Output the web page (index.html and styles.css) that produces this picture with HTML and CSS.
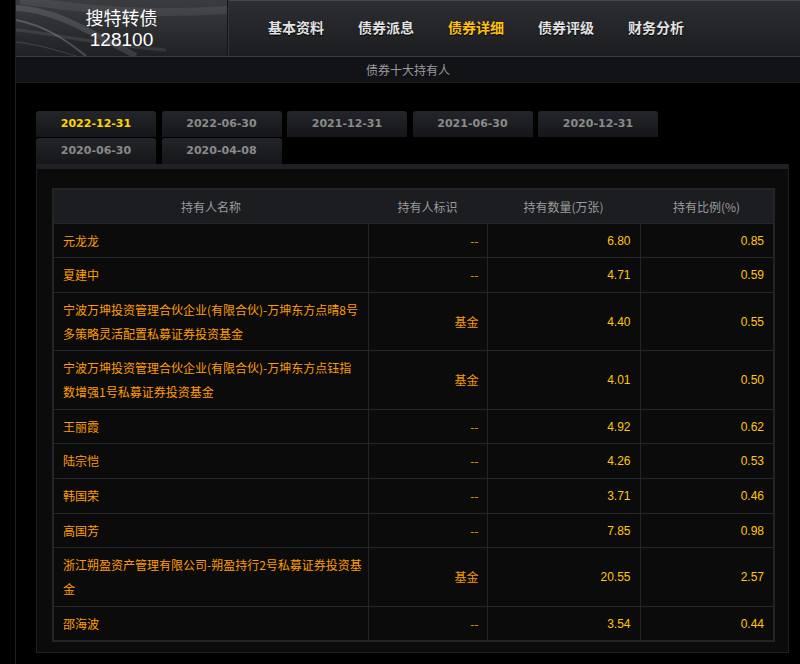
FILE: index.html
```html
<!DOCTYPE html>
<html lang="zh-CN">
<head>
  <meta charset="UTF-8">
  <title>搜特转债 - 债券十大持有人</title>
  <link rel="stylesheet" href="styles.css">
</head>
<body>
  <div class="page">
    <div class="top">
      <div class="logo">
        <svg class="swoosh" width="212" height="56" viewBox="0 0 212 56">
          <path d="M0 8 C40 10 70 30 120 56" stroke="rgba(255,255,255,0.12)" stroke-width="6" fill="none"/>
          <path d="M0 20 C30 26 50 40 70 56" stroke="rgba(255,255,255,0.20)" stroke-width="2" fill="none"/>
          <path d="M0 30 C40 34 80 44 150 50" stroke="rgba(255,255,255,0.09)" stroke-width="3" fill="none"/>
          <path d="M4 0 C60 8 120 16 212 10" stroke="rgba(255,255,255,0.07)" stroke-width="8" fill="none"/>
          <path d="M0 42 C20 44 40 50 60 56" stroke="rgba(255,255,255,0.14)" stroke-width="1" fill="none"/>
        </svg>
        <div class="name">搜特转债</div>
        <div class="code">128100</div>
      </div>
      <ul class="nav">
        <li>基本资料</li>
        <li>债券派息</li>
        <li class="on">债券详细</li>
        <li>债券评级</li>
        <li>财务分析</li>
      </ul>
    </div>
    <div class="subbar">债券十大持有人</div>

    <div class="main">
      <div class="tabs">
        <div class="tab on">2022-12-31</div>
        <div class="tab">2022-06-30</div>
        <div class="tab">2021-12-31</div>
        <div class="tab">2021-06-30</div>
        <div class="tab">2020-12-31</div>
        <div class="tab">2020-06-30</div>
        <div class="tab">2020-04-08</div>
      </div>

      <div class="panel">
        <table class="holders">
          <colgroup>
            <col style="width:315px">
            <col style="width:119px">
            <col style="width:153px">
            <col style="width:134px">
          </colgroup>
          <thead>
            <tr>
              <th>持有人名称</th>
              <th>持有人标识</th>
              <th>持有数量(万张)</th>
              <th>持有比例(%)</th>
            </tr>
          </thead>
          <tbody>
            <tr><td class="nm">元龙龙</td><td class="tag">--</td><td class="num">6.80</td><td class="num">0.85</td></tr>
            <tr><td class="nm">夏建中</td><td class="tag">--</td><td class="num">4.71</td><td class="num">0.59</td></tr>
            <tr><td class="nm">宁波万坤投资管理合伙企业(有限合伙)-万坤东方点晴8号多策略灵活配置私募证券投资基金</td><td class="tag">基金</td><td class="num">4.40</td><td class="num">0.55</td></tr>
            <tr><td class="nm">宁波万坤投资管理合伙企业(有限合伙)-万坤东方点钰指数增强1号私募证券投资基金</td><td class="tag">基金</td><td class="num">4.01</td><td class="num">0.50</td></tr>
            <tr><td class="nm">王丽霞</td><td class="tag">--</td><td class="num">4.92</td><td class="num">0.62</td></tr>
            <tr><td class="nm">陆宗恺</td><td class="tag">--</td><td class="num">4.26</td><td class="num">0.53</td></tr>
            <tr><td class="nm">韩国荣</td><td class="tag">--</td><td class="num">3.71</td><td class="num">0.46</td></tr>
            <tr><td class="nm">高国芳</td><td class="tag">--</td><td class="num">7.85</td><td class="num">0.98</td></tr>
            <tr><td class="nm">浙江朔盈资产管理有限公司-朔盈持行2号私募证券投资基金</td><td class="tag">基金</td><td class="num">20.55</td><td class="num">2.57</td></tr>
            <tr><td class="nm">邵海波</td><td class="tag">--</td><td class="num">3.54</td><td class="num">0.44</td></tr>
          </tbody>
        </table>
      </div>
    </div>
  </div>
</body>
</html>
```

FILE: styles.css
```css
* {
  box-sizing: border-box;
}

body {
  margin: 0;
  background: #000;
  font-family: "Noto Sans CJK SC", sans-serif;
}

.page {
  margin-left: 15px;
  border-left: 1px solid #1e1e1e;
  min-height: 664px;
}

/* cabeçalho */
.top {
  display: flex;
  height: 57px;
  background: linear-gradient(#2c2e32, #1c1d21);
  box-shadow: inset 0 1px 0 #45474c;
  border-bottom: 1px solid #3a3b3f;
}

.logo {
  position: relative;
  width: 212px;
  display: flex;
  flex-direction: column;
  align-items: center;
  justify-content: center;
  gap: 1px;
  background: linear-gradient(#3a3c40, #202125);
  border-right: 1px solid #121315;
  box-shadow: 1px 0 0 #34363a;
  overflow: hidden;
}

.swoosh {
  position: absolute;
  left: 0;
  top: 0;
}

.name,
.code {
  position: relative;
  color: #fff;
  line-height: 21px;
}

.name {
  font-size: 18px;
}

.code {
  font-family: "Liberation Sans", sans-serif;
  font-size: 19px;
}

.nav {
  display: flex;
  align-items: center;
  list-style: none;
  margin: 0;
  padding: 0 0 2px 23px;
}

.nav li {
  width: 90px;
  text-align: center;
  font-size: 14px;
  font-weight: bold;
  color: #e2e2e2;
  text-shadow: 0 1px 1px #000;
}

.nav li.on {
  color: #ffc20e;
}

.subbar {
  height: 26px;
  line-height: 25px;
  background: #121316;
  border-bottom: 1px solid #1d1e21;
  text-align: center;
  font-size: 12px;
  color: #9a9a9a;
}

/* conteúdo */
.main {
  padding: 28px 11px 12px 20px;
}

.tabs {
  display: flex;
  flex-wrap: wrap;
  width: 630px;
  column-gap: 5.5px;
  row-gap: 1px;
}

.tab {
  width: 120px;
  height: 26px;
  line-height: 26px;
  text-align: center;
  font-family: "DejaVu Sans", sans-serif;
  font-size: 11px;
  font-weight: bold;
  color: #8a8a8a;
  background: linear-gradient(#24252a, #151619);
  border-radius: 3px 3px 0 0;
}

.tab.on {
  color: #ffd400;
}

.panel {
  background: #0b0b0b;
  border: 1px solid #1f2023;
  border-top: 5px solid #202125;
  padding: 19px 15px 10px 15px;
}

.holders {
  width: 100%;
  table-layout: fixed;
  border-collapse: collapse;
  border: 2px solid #232428;
  font-size: 12px;
}

.holders th {
  height: 34px;
  background: #1c1d21;
  color: #9b9b9b;
  font-weight: normal;
  text-align: center;
  border-bottom: 1px solid #25262a;
}

.holders td {
  padding: 5px 9px 4.6px 9px;
  line-height: 24px;
  border: 1px solid #25262a;
}

.holders .nm {
  color: #ff9d00;
  padding-right: 5px;
}

.holders .tag {
  text-align: right;
  padding-right: 8px;
  color: #f59a00;
}

.holders .num {
  text-align: right;
  font-family: "Liberation Sans", sans-serif;
  color: #ffc800;
}
```
